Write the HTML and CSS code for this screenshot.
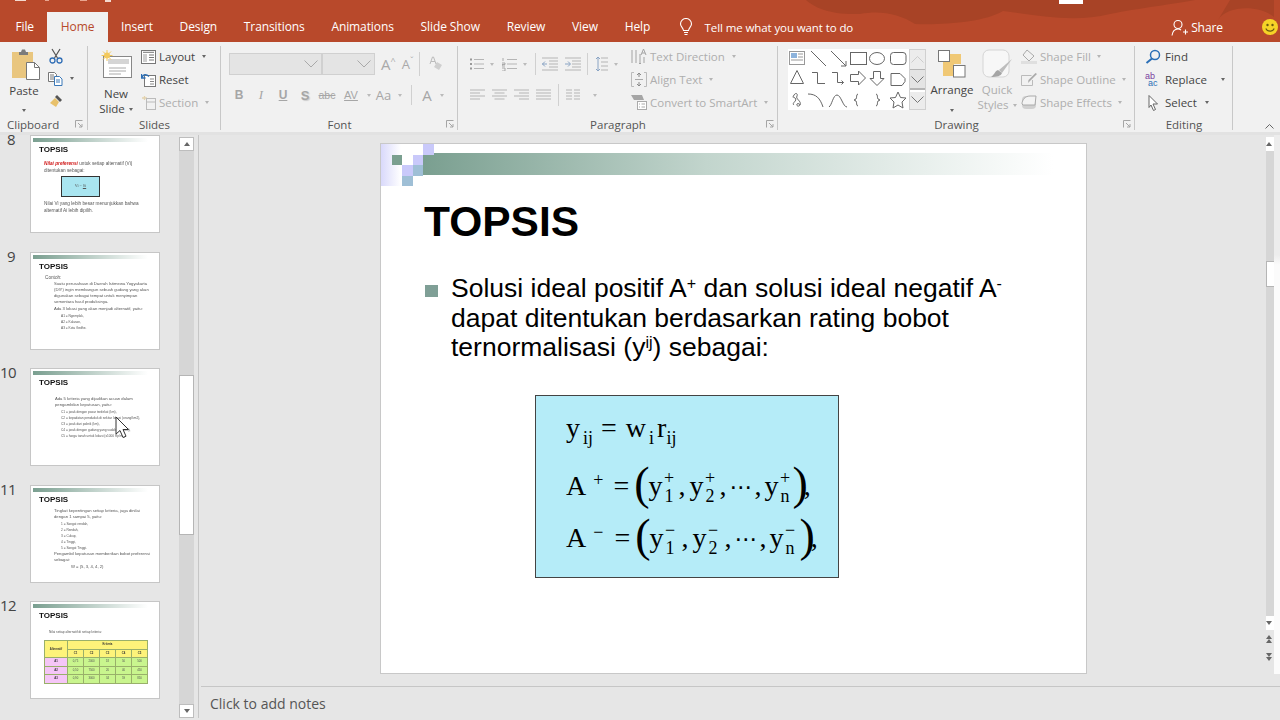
FILE: index.html
```html
<!DOCTYPE html>
<html lang="en">
<head>
    <meta charset="UTF-8">
    <title>TOPSIS - PowerPoint</title>
    <link rel="stylesheet" href="styles.css">
</head>
<body>
    <svg class="defs" width="0" height="0">
        <symbol id="lines-left" viewBox="0 0 15 12"><path d="M0 1h15M0 4h10M0 7h15M0 10h10" stroke="#b5b5b5" fill="none"/></symbol>
        <symbol id="lines-center" viewBox="0 0 15 12"><path d="M0 1h15M2.500 4h10M0 7h15M2.500 10h10" stroke="#b5b5b5" fill="none"/></symbol>
        <symbol id="lines-right" viewBox="0 0 15 12"><path d="M0 1h15M5 4h10M0 7h15M5 10h10" stroke="#b5b5b5" fill="none"/></symbol>
        <symbol id="lines-full" viewBox="0 0 15 12"><path d="M0 1h15M0 4h15M0 7h15M0 10h15" stroke="#b5b5b5" fill="none"/></symbol>
        <symbol id="launcher" viewBox="0 0 8 8"><path d="M.5 7.500v-7h7M3 3l4 4M7 4v3H4" stroke="#a5a5a5" fill="none"/></symbol>
    </svg>

    <!-- Title bar and tabs -->
    <header class="titlebar">
        <svg class="waves" width="1280" height="42" viewBox="0 0 1280 42">
            <path d="M806 0C815 8 830 15 860 14C880 10 900 14 915 24C945 25 985 22 1003 11C1040 16 1075 23 1110 14C1140 8 1175 4 1195 0Z" fill="#a84326"/>
            <path d="M1218 20C1226 6 1258 4 1274 17V0H1230Z" fill="#a84326"/>
        </svg>
        <div class="qat">
            <span class="qat-bit qat-a"></span>
            <span class="qat-bit qat-b"></span>
            <span class="qat-bit qat-c"></span>
            <span class="qat-bit qat-d"></span>
            <span class="qat-white"></span>
        </div>
        <nav class="tabs">
            <span class="tab">File</span>
            <span class="tab tab-active">Home</span>
            <span class="tab">Insert</span>
            <span class="tab">Design</span>
            <span class="tab">Transitions</span>
            <span class="tab">Animations</span>
            <span class="tab">Slide Show</span>
            <span class="tab">Review</span>
            <span class="tab">View</span>
            <span class="tab">Help</span>
            <span class="tell">
                <svg width="14" height="18" viewBox="0 0 14 18"><path d="M4.500 12.500C4 9.500 1.500 8.500 1.500 6a5.500 5.500 0 0 1 11 0c0 2.500-2.500 3.500-3 6.500zM5 14.500h4M5.500 16.500h3" fill="none" stroke="#fff" stroke-width="1.100"/></svg>
                Tell me what you want to do
            </span>
            <span class="share">
                <svg width="17" height="17" viewBox="0 0 17 17"><circle cx="7" cy="5.500" r="4" fill="none" stroke="#fff" stroke-width="1.100"/><path d="M1 16.500c.5-4 3-6.500 6-6.500 1 0 2 .3 3 1M12 13h5M14.500 10.500v5" fill="none" stroke="#fff" stroke-width="1.100"/></svg>
                Share
            </span>
            <svg class="smiley" width="16" height="16" viewBox="0 0 16 16"><circle cx="8" cy="8" r="8" fill="#f5d327"/><circle cx="5.500" cy="6" r="1.200" fill="#6b5a10"/><circle cx="10.500" cy="6" r="1.200" fill="#6b5a10"/><path d="M3.800 9.500c1.500 3.500 7 3.500 8.400 0" fill="none" stroke="#6b5a10" stroke-width="1.100"/></svg>
        </nav>
    </header>

    <!-- Ribbon -->
    <section class="ribbon">
        <div class="group group-clipboard">
            <div class="group-body">
                <div class="big-btn paste-btn">
                    <svg width="28" height="31" viewBox="0 0 28 31"><rect x="0" y="3" width="21" height="26" fill="#e9c67f"/><path d="M7 3h2l1-2.500h3l1 2.500h2v3H7z" fill="#7b7b7b"/><path d="M14.500 13.500h8l5 5v12h-13z" fill="#fff" stroke="#777"/><path d="M22.500 13.500v5h5" fill="none" stroke="#777"/></svg>
                    <span class="big-label">Paste</span>
                    <i class="caret caret-big"></i>
                </div>
                <div class="icon-col">
                    <svg width="16" height="16" viewBox="0 0 16 16"><path d="M4 1l5.500 9M12 1L6.500 10" stroke="#555" stroke-width="1.200" fill="none"/><circle cx="4.500" cy="12.500" r="2.500" fill="none" stroke="#2f6db5" stroke-width="1.300"/><circle cx="11.500" cy="12.500" r="2.500" fill="none" stroke="#2f6db5" stroke-width="1.300"/></svg>
                    <span class="icon-caret">
                        <svg width="15" height="14" viewBox="0 0 15 14"><path d="M.5.500h6l2 2v7h-8zM2 3h4M2 5h4M2 7h4" fill="#fff" stroke="#777"/><path d="M6.500 4.500h5l2.500 2.500v6.500H6.500z" fill="#fff" stroke="#3b78b8"/><path d="M8 8h4M8 10h4" stroke="#3b78b8"/></svg>
                        <i class="caret"></i>
                    </span>
                    <svg width="16" height="16" viewBox="0 0 16 16"><path d="M9 2l5 5-2 2-5-5z" fill="#555"/><path d="M7 5l4 4-3 5-6-4z" fill="#e8c16b"/></svg>
                </div>
            </div>
            <div class="group-label label-clip">Clipboard<svg class="launch launch-clip" width="8" height="8"><use href="#launcher"/></svg></div>
        </div>

        <div class="group group-slides">
            <div class="group-body">
                <div class="big-btn new-slide">
                    <svg width="31" height="28" viewBox="0 0 31 28"><rect x="2.500" y="6.500" width="28" height="21" fill="#fff" stroke="#888"/><rect x="7" y="9" width="21" height="5" fill="#d5d5d5"/><path d="M8 18h17M8 21h17M8 24h12" stroke="#aaa"/><circle cx="6" cy="5.500" r="3" fill="#f3c95c"/><path d="M6 0v11M.5 5.500h11M2 1.500l8 8M10 1.500l-8 8" stroke="#f3c95c"/></svg>
                    <span class="big-label new-label">New<br>Slide<i class="caret caret-inline"></i></span>
                </div>
                <div class="small-col">
                    <div class="small"><svg width="15" height="14" viewBox="0 0 15 14"><rect x=".5" y=".5" width="14" height="13" fill="#fff" stroke="#777"/><rect x="2" y="4" width="4" height="8" fill="#cfcfcf"/><path d="M2 2.300h11M8 5h5M8 7.500h5M8 10h5" stroke="#777"/></svg><span>Layout</span><i class="caret"></i></div>
                    <div class="small"><svg width="15" height="14" viewBox="0 0 15 14"><rect x="3.500" y="2.500" width="11" height="11" fill="#fff" stroke="#777"/><path d="M9 6h4M9 8.500h4M9 11h4" stroke="#888"/><path d="M8 3.500C5 .5 2 1.500.8 4.500M.5 1v4h4" fill="none" stroke="#2b6fb6" stroke-width="1.300"/></svg><span>Reset</span></div>
                    <div class="small is-off"><svg width="15" height="14" viewBox="0 0 15 14"><path d="M1 2h5M3.500 0v4" stroke="#e4d3ae" stroke-width="1.300"/><rect x="5.500" y="2.500" width="9" height="11" fill="none" stroke="#bbb"/><path d="M5.500 6h9" stroke="#bbb"/></svg><span>Section</span><i class="caret"></i></div>
                </div>
            </div>
            <div class="group-label">Slides</div>
        </div>

        <div class="group group-font">
            <div class="group-body group-rows">
                <div class="row-a font-row-a">
                    <span class="combo combo-name"><svg width="14" height="8" viewBox="0 0 14 8"><path d="M.5.500L7 7l6.500-6.500" fill="none" stroke="#a9a9a9"/></svg></span>
                    <span class="combo combo-size"><svg width="14" height="8" viewBox="0 0 14 8"><path d="M.5.500L7 7l6.500-6.500" fill="none" stroke="#a9a9a9"/></svg></span>
                    <span class="glyph glyph-grow">A<small>^</small></span>
                    <span class="glyph glyph-shrink">A<small>ˇ</small></span>
                    <i class="vsep vsep-font"></i>
                    <svg class="eraser" width="15" height="16" viewBox="0 0 15 16"><path d="M8 6l5 3-3 5-5-3z" fill="#cfcfcf"/><path d="M1 8l2.500-7h1L7 8M2 5.500h4" fill="none" stroke="#bbb"/></svg>
                </div>
                <div class="row-b font-row-b">
                    <span class="fmt fmt-b">B</span>
                    <span class="fmt fmt-i">I</span>
                    <span class="fmt fmt-u">U</span>
                    <span class="fmt fmt-s">S</span>
                    <span class="fmt fmt-abc">abc</span>
                    <span class="fmt fmt-av">AV</span><i class="caret"></i>
                    <span class="fmt fmt-aa">Aa</span><i class="caret"></i>
                    <i class="vsep vsep-b"></i>
                    <span class="fmt fmt-a">A</span><i class="caret"></i>
                </div>
            </div>
            <div class="group-label">Font<svg class="launch" width="8" height="8"><use href="#launcher"/></svg></div>
        </div>

        <div class="group group-para">
            <div class="group-body">
                <div class="group-rows para-left">
                    <div class="row-a para-row-a">
                        <svg width="14" height="14" viewBox="0 0 14 14"><path d="M4 2.500h10M4 7h10M4 11.500h10" stroke="#b5b5b5"/><path d="M0 2.500h2M0 7h2M0 11.500h2" stroke="#999" stroke-width="2"/></svg><i class="caret"></i>
                        <svg class="mg-num" width="15" height="14" viewBox="0 0 15 14"><path d="M5 2.500h10M5 7h10M5 11.500h10" stroke="#b5b5b5"/><path d="M1 1v3M0 6h3v1.500H0V9h3M0 11h3v3H0" stroke="#999" fill="none" stroke-width=".8"/></svg><i class="caret"></i>
                        <i class="vsep vsep-p1"></i>
                        <svg width="16" height="14" viewBox="0 0 16 14"><path d="M0 1h16M7 4h9M7 7h9M7 10h9M0 13h16" stroke="#b5b5b5"/><path d="M5 7H0M3 4.500L.5 7 3 9.500" stroke="#8aa4c4" fill="none"/></svg>
                        <svg class="mg-inc" width="16" height="14" viewBox="0 0 16 14"><path d="M0 1h16M7 4h9M7 7h9M7 10h9M0 13h16" stroke="#b5b5b5"/><path d="M0 7h5M3 4.500L5.500 7 3 9.500" stroke="#8aa4c4" fill="none"/></svg>
                        <i class="vsep vsep-p2"></i>
                        <svg width="12" height="15" viewBox="0 0 12 15"><path d="M5 2h7M5 6h7M5 10h7M5 14h7" stroke="#b5b5b5" transform="translate(0 -1)"/><path d="M2 0v14M0 2l2-2 2 2M0 12l2 2 2-2" stroke="#8aa4c4" fill="none"/></svg><i class="caret"></i>
                    </div>
                    <div class="row-b para-row-b">
                        <svg width="15" height="12"><use href="#lines-left"/></svg>
                        <svg width="15" height="12"><use href="#lines-center"/></svg>
                        <svg width="15" height="12"><use href="#lines-right"/></svg>
                        <svg width="15" height="12"><use href="#lines-full"/></svg>
                        <i class="vsep vsep-p3"></i>
                        <svg width="14" height="12" viewBox="0 0 14 12"><path d="M0 1h6M0 4h6M0 7h6M0 10h6M8 1h6M8 4h6M8 7h6M8 10h6" stroke="#b5b5b5"/></svg><i class="caret"></i>
                    </div>
                </div>
                <div class="small-col para-col">
                    <div class="small is-off"><svg width="16" height="15" viewBox="0 0 16 15"><path d="M1 1v13M5 1v13M9 5v9M13 8v6M8 14l1 1 1-1" stroke="#a3a3a3" fill="none"/><path d="M10 6l2.500-6 2.500 6M11 4h3" stroke="#a3a3a3" fill="none"/></svg><span>Text Direction</span><i class="caret"></i></div>
                    <div class="small is-off"><svg width="16" height="15" viewBox="0 0 16 15"><path d="M3 .5H.5v14H3M13 .5h2.500v14H13" stroke="#bbb" fill="none"/><path d="M4 7.500h8" stroke="#aaa"/><path d="M8 1v4M6 3l2-2 2 2M8 14v-4M6 12l2 2 2-2" stroke="#8a8a8a" fill="none"/></svg><span>Align Text</span><i class="caret"></i></div>
                    <div class="small is-off"><svg width="16" height="15" viewBox="0 0 16 15"><path d="M0 0h11l2 5H3z" fill="#a6a6a6"/><rect x="6.500" y="6.500" width="9" height="8" fill="#fff" stroke="#aaa"/><path d="M8 9h1M8 12h1M10.500 9h3.500M10.500 12h3.500" stroke="#aaa"/></svg><span>Convert to SmartArt</span><i class="caret"></i></div>
                </div>
            </div>
            <div class="group-label">Paragraph<svg class="launch" width="8" height="8"><use href="#launcher"/></svg></div>
        </div>

        <div class="group group-draw">
            <div class="group-body">
                <div class="gallery">
                    <svg class="shapes" width="121" height="60" viewBox="0 0 121 60" fill="none" stroke="#666">
                        <rect x="1.500" y="2.500" width="15" height="13" stroke="#999"/><rect x="3" y="4" width="6" height="5" fill="#8db3dc" stroke="none"/><path d="M10 5h5M10 8h5M3 11h12" stroke="#999"/>
                        <path d="M23 2l15 15"/>
                        <path d="M43 2l15 15M53 17h5v-5"/>
                        <rect x="62.500" y="3.500" width="16" height="12"/>
                        <ellipse cx="89" cy="9.500" rx="7.500" ry="6"/>
                        <rect x="102.500" y="3.500" width="15.500" height="12" rx="3"/>
                        <path d="M9 21.500l6.500 13H2.500z"/>
                        <path d="M24 23.500h5.500v11H37"/>
                        <path d="M44 23.500h5.500v10h6M53.500 31.500l2 2-2 2"/>
                        <path d="M62.500 25.500h8v-3.500l7 7-7 7v-3.500h-8z"/>
                        <path d="M85.500 22.500h7v7h3.500l-7 7-7-7h3.500z"/>
                        <path d="M103 24.500h9l5 5v3l-3 4h-11z"/>
                        <path d="M6 56c-3-2 4-4 1-7-2-2-3 1-1-3 2-3 4-1 3 1-2 3 5 5 3 9-1 2-4 1-3-1 1-1 3 0 3 1"/>
                        <path d="M20 45c8 0 12 4 15 13"/>
                        <path d="M41 58c3-2 4-12 8-12s6 12 10 12"/>
                        <path d="M70 45c-2 0-1 4-2 5l-2 1 2 1c1 1 0 5 2 5"/>
                        <path d="M88 45c2 0 1 4 2 5l2 1-2 1c-1 1 0 5-2 5"/>
                        <path d="M110 43l2.500 5.500 5.500.5-4 4 1 6-5-3-5 3 1-6-4-4 5.500-.5z"/>
                    </svg>
                    <div class="gal-scroll">
                        <span class="gal-btn gal-up"><svg width="13" height="7" viewBox="0 0 13 7"><path d="M.5 6.500l6-6 6 6" fill="none" stroke="#ccc"/></svg></span>
                        <span class="gal-btn gal-down"><svg width="13" height="7" viewBox="0 0 13 7"><path d="M.5.500l6 6 6-6" fill="none" stroke="#777"/></svg></span>
                        <span class="gal-btn gal-more"><svg width="13" height="7" viewBox="0 0 13 7"><path d="M.5.500l6 6 6-6" fill="none" stroke="#777"/></svg></span>
                    </div>
                </div>
                <div class="big-btn arrange">
                    <svg width="28" height="28" viewBox="0 0 28 28"><rect x="5" y="4" width="18" height="10" fill="#f0c875"/><rect x="5" y="14" width="11" height="12" fill="#f0c875"/><rect x=".5" y=".5" width="11" height="11" fill="#fff" stroke="#777"/><rect x="15.500" y="15.500" width="11.500" height="11.500" fill="#fff" stroke="#777"/></svg>
                    <span class="big-label">Arrange</span>
                    <i class="caret caret-big"></i>
                </div>
                <div class="big-btn quick is-off">
                    <svg width="30" height="30" viewBox="0 0 30 30"><rect x="1" y="1" width="26" height="27" rx="6" fill="#f7f7f7" stroke="#d5d5d5"/><path d="M30 10L17 21l3 3z" fill="#bdbdbd"/><path d="M16 21c-3 1-3 4-7 7 6 0 10-1 11-4z" fill="#a5a5a5"/></svg>
                    <span class="big-label new-label">Quick<br>Styles<i class="caret caret-inline"></i></span>
                </div>
                <div class="small-col shape-col">
                    <div class="small is-off"><svg width="17" height="15" viewBox="0 0 17 15"><path d="M6 1l7 6-5 5-6-6z" fill="none" stroke="#aaa"/><path d="M0 12h16v3H0z" fill="#dfdfdf"/></svg><span>Shape Fill</span><i class="caret"></i></div>
                    <div class="small is-off"><svg width="17" height="15" viewBox="0 0 17 15"><path d="M.5 3.500h10M.5 3.500v10h11V8" fill="none" stroke="#bbb"/><path d="M16 2L9 9l-2 2 .5-3 7-7z" fill="#aaa"/></svg><span>Shape Outline</span><i class="caret"></i></div>
                    <div class="small is-off"><svg width="17" height="15" viewBox="0 0 17 15"><rect x="1" y="1" width="14" height="13" rx="4" fill="#d0d0d0"/><path d="M1 9c0-4 3-8 8-8h6l-1 9H2z" fill="#f3f3f3" stroke="#aaa"/></svg><span>Shape Effects</span><i class="caret"></i></div>
                </div>
            </div>
            <div class="group-label">Drawing<svg class="launch" width="8" height="8"><use href="#launcher"/></svg></div>
        </div>

        <div class="group group-edit">
            <div class="group-body">
                <div class="small-col edit-col">
                    <div class="small"><svg width="16" height="15" viewBox="0 0 16 15"><circle cx="10" cy="6" r="4.500" fill="none" stroke="#2b6fb6" stroke-width="1.500"/><path d="M7 9.500L1.500 14" stroke="#2b6fb6" stroke-width="2"/></svg><span>Find</span></div>
                    <div class="small"><span class="replace-icon"><b>ab</b><b>ac</b></span><span>Replace</span><i class="caret caret-far"></i></div>
                    <div class="small"><svg width="16" height="16" viewBox="0 0 16 16"><path d="M4 .5l8.500 8.500H8l2.500 5.500-2 1L6 10l-2 2.500z" fill="#fff" stroke="#666"/></svg><span>Select</span><i class="caret"></i></div>
                </div>
            </div>
            <div class="group-label">Editing</div>
        </div>

        <div class="ribbon-end">
            <svg class="collapse" width="9" height="5" viewBox="0 0 9 5"><path d="M.5 4.500l4-4 4 4" fill="none" stroke="#666"/></svg>
        </div>
    </section>

    <!-- Workspace -->
    <main class="workspace">
        <aside class="side">
            <div class="thumbs">
                <div class="thumb-row">
                    <span class="num">8</span>
                    <div class="thumb"><div class="mini">
                        <i class="mini-band"></i>
                        <div class="mini-title">TOPSIS</div>
                        <div class="t1 t-first8"><em>Nilai preferensi</em> untuk setiap alternatif (Vi) ditentukan sebagai:</div>
                        <div class="mini-formula">Vi = <u>Si</u></div>
                        <div class="t1">Nilai Vi yang lebih besar menunjukkan bahwa alternatif Ai lebih dipilih.</div>
                    </div></div>
                </div>
                <div class="thumb-row">
                    <span class="num">9</span>
                    <div class="thumb"><div class="mini">
                        <i class="mini-band"></i>
                        <div class="mini-title">TOPSIS</div>
                        <div class="t0">Contoh:</div>
                        <div class="t2">Suatu perusahaan di Daerah Istimewa Yogyakarta (DIY) ingin membangun sebuah gudang yang akan digunakan sebagai tempat untuk menyimpan sementara hasil produksinya.</div>
                        <div class="t2">Ada 3 lokasi yang akan menjadi alternatif, yaitu:</div>
                        <div class="t3">A1 = Ngemplak,</div>
                        <div class="t3">A2 = Kalasan,</div>
                        <div class="t3">A3 = Kota Gedhe.</div>
                    </div></div>
                </div>
                <div class="thumb-row">
                    <span class="num">10</span>
                    <div class="thumb"><div class="mini">
                        <i class="mini-band"></i>
                        <div class="mini-title">TOPSIS</div>
                        <div class="t2 t-gap">Ada 5 kriteria yang dijadikan acuan dalam pengambilan keputusan, yaitu:</div>
                        <div class="t3">C1 = jarak dengan pasar terdekat (km),</div>
                        <div class="t3">C2 = kepadatan penduduk di sekitar lokasi (orang/km2),</div>
                        <div class="t3">C3 = jarak dari pabrik (km),</div>
                        <div class="t3">C4 = jarak dengan gudang yang sudah ada (km),</div>
                        <div class="t3">C5 = harga tanah untuk lokasi (x1000 Rp/m2).</div>
                    </div></div>
                </div>
                <div class="thumb-row">
                    <span class="num">11</span>
                    <div class="thumb"><div class="mini">
                        <i class="mini-band"></i>
                        <div class="mini-title">TOPSIS</div>
                        <div class="t2">Tingkat kepentingan setiap kriteria, juga dinilai dengan 1 sampai 5, yaitu:</div>
                        <div class="t3">1 = Sangat rendah,</div>
                        <div class="t3">2 = Rendah,</div>
                        <div class="t3">3 = Cukup,</div>
                        <div class="t3">4 = Tinggi,</div>
                        <div class="t3">5 = Sangat Tinggi.</div>
                        <div class="t2">Pengambil keputusan memberikan bobot preferensi sebagai:</div>
                        <div class="t-w">W = (5, 3, 4, 4, 2)</div>
                    </div></div>
                </div>
                <div class="thumb-row">
                    <span class="num">12</span>
                    <div class="thumb"><div class="mini">
                        <i class="mini-band"></i>
                        <div class="mini-title">TOPSIS</div>
                        <div class="t3 t-gap12">Nilai setiap alternatif di setiap kriteria:</div>
                        <table class="mini-table">
                            <tr><th rowspan="2" class="alt">Alternatif</th><th colspan="5">Kriteria</th></tr>
                            <tr><th>C1</th><th>C2</th><th>C3</th><th>C4</th><th>C5</th></tr>
                            <tr><th class="alt">A1</th><td>0,75</td><td>2000</td><td>18</td><td>50</td><td>500</td></tr>
                            <tr><th class="alt">A2</th><td>0,50</td><td>7500</td><td>20</td><td>40</td><td>450</td></tr>
                            <tr><th class="alt">A3</th><td>0,90</td><td>3000</td><td>34</td><td>59</td><td>850</td></tr>
                        </table>
                    </div></div>
                </div>
                <div class="thumb-row">
                    <span class="num">13</span>
                    <div class="thumb"></div>
                </div>
            </div>
            <div class="side-scroll">
                <span class="sb-btn"><i class="tri-up"></i></span>
                <span class="sb-track sb-track-a"></span>
                <span class="sb-thumb"></span>
                <span class="sb-track sb-track-b"></span>
                <span class="sb-btn"><i class="tri-down"></i></span>
            </div>
        </aside>

        <div class="center">
            <div class="canvas">
                <div class="slide-wrap">
                    <article class="slide">
                        <i class="slide-band"></i>
                        <div class="checker">
                            <i class="c-fade"></i>
                            <i class="c-green"></i>
                            <i class="c-lav c-a"></i>
                            <i class="c-lav c-b"></i>
                            <i class="c-lav c-c"></i>
                            <i class="c-blue c-d"></i>
                            <i class="c-blue c-e"></i>
                        </div>
                        <h1 class="slide-title">TOPSIS</h1>
                        <div class="slide-bullet">
                            <i class="bullet"></i>
                            <p>Solusi ideal positif A<sup>+</sup> dan solusi ideal negatif A<sup>-</sup><br>dapat ditentukan berdasarkan rating bobot<br>ternormalisasi (y<sup>ij</sup>) sebagai:</p>
                        </div>
                        <div class="formula">
                            <div class="f-row f-row1">y<span class="fs sub m3">ij</span><span class="m8">=</span><span class="m9">w</span><span class="fs sub m3">i</span><span class="m3">r</span><span class="fs sub">ij</span></div>
                            <div class="f-row f-row2">A<span class="fs sup m7">+</span><span class="m10">=</span><span class="paren m5">(</span><span class="m-1">y</span><span class="stack"><span>+</span><span>1</span></span><span class="m3">,</span><span class="m4">y</span><span class="stack"><span>+</span><span>2</span></span><span class="m3">,</span><span class="dots m3">⋯</span><span class="m3">,</span><span class="m3">y</span><span class="stack"><span>+</span><span class="n">n</span></span><span class="paren m1">)</span><span class="m-4">,</span></div>
                            <div class="f-row f-row3">A<span class="fs sup m7">−</span><span class="m11">=</span><span class="paren m5">(</span><span class="m-1">y</span><span class="stack"><span>−</span><span>1</span></span><span class="m5">,</span><span class="m4">y</span><span class="stack"><span>−</span><span>2</span></span><span class="m5">,</span><span class="dots m3">⋯</span><span class="m3">,</span><span class="m3">y</span><span class="stack"><span>−</span><span class="n">n</span></span><span class="paren m3">)</span><span class="m-4">,</span></div>
                        </div>
                    </article>
                </div>
                <div class="main-scroll">
                    <span class="ms-btn"><i class="tri-up"></i></span>
                    <span class="ms-track ms-a"></span>
                    <span class="ms-thumb"></span>
                    <span class="ms-track ms-b"></span>
                    <span class="ms-btn"><i class="tri-down"></i></span>
                    <span class="ms-page"><i class="tri-up"></i><i class="tri-up"></i></span>
                    <span class="ms-page"><i class="tri-down"></i><i class="tri-down"></i></span>
                </div>
                <div class="edge"></div>
            </div>
            <div class="notes">Click to add notes</div>
        </div>
    </main>

    <!-- Mouse pointer over thumbnail 10 -->
    <svg class="pointer" width="15" height="23" viewBox="0 0 15 23"><path d="M1 1v17l4-3.500 3 7 3-1.300-3-6.700h5.500z" fill="#fff" stroke="#333"/></svg>
</body>
</html>
```
FILE: styles.css
```css
/* Grunddesign */
body {
    margin: 0;
    width: 1280px;
    height: 720px;
    overflow: hidden;
    display: flex;
    flex-direction: column;
    background-color: #e6e6e6;
    color: #444;
    font-family: "Open Sans", sans-serif;
    font-size: 11.5px;
    position: relative;
}

.defs {
    position: absolute;
}

i {
    display: block;
    font-style: normal;
}

/* Title bar */
.titlebar {
    height: 42px;
    flex: none;
    background-color: #b8492b;
    color: #fff;
    position: relative;
}

.waves {
    position: absolute;
    top: 0;
    left: 0;
}

.qat {
    height: 12px;
    display: flex;
    position: relative;
}

.qat-bit {
    height: 1px;
    background-color: #f3d9cf;
}

.qat-a { width: 11px; margin-left: 15px; }
.qat-b { width: 4px; margin-left: 19px; background-color: #e9a58f; }
.qat-c { width: 7px; margin-left: 31px; background-color: #e9a58f; }
.qat-d { width: 6px; margin-left: 18px; height: 2px; }

.qat-white {
    width: 24px;
    height: 4px;
    margin-left: 948px;
    background-color: #fff;
}

.tabs {
    height: 30px;
    display: flex;
    align-items: center;
    position: relative;
    padding-left: 2px;
    font-size: 12px;
    letter-spacing: -0.1px;
}

.tab {
    height: 30px;
    line-height: 30px;
    padding: 0 13.400px;
}

.tab-active {
    background-color: #f1f1f1;
    color: #b8492b;
}

.tell {
    display: flex;
    align-items: center;
    gap: 12px;
    margin-left: 15px;
    font-size: 11.500px;
}

.share {
    display: flex;
    align-items: center;
    gap: 3px;
    margin-left: 318px;
}

.smiley {
    margin-left: 39px;
}

/* Ribbon */
.ribbon {
    height: 90px;
    flex: none;
    display: flex;
    background-color: #f1f1f1;
    border-bottom: 3px solid #e2e2e2;
}

.group {
    flex: none;
    display: flex;
    flex-direction: column;
    position: relative;
    padding-top: 3px;
    box-sizing: border-box;
}

.group::after {
    content: "";
    position: absolute;
    right: 0;
    top: 4px;
    bottom: 2px;
    width: 1px;
    background-color: #c8c8c8;
}

.group-clipboard { width: 88px; }
.group-slides { width: 133px; }
.group-font { width: 237px; }
.group-para { width: 320px; }
.group-draw { width: 357px; }
.group-edit { width: 98px; }

.group-body {
    height: 72px;
    display: flex;
}

.group-label {
    height: 15px;
    line-height: 15px;
    text-align: center;
    font-size: 11.500px;
    position: relative;
    color: #555;
}

.label-clip {
    text-align: left;
    padding-left: 7px;
}

.launch {
    position: absolute;
    right: 4px;
    top: 3px;
}

.launch-clip {
    right: 5px;
}

.big-btn {
    display: flex;
    flex-direction: column;
    align-items: center;
    padding-top: 4px;
}

.big-label {
    text-align: center;
    line-height: 15.500px;
}

.paste-btn {
    width: 32px;
    margin-left: 8px;
    gap: 3px;
}

.paste-btn svg {
    margin-left: 4px;
}

.new-slide {
    width: 40px;
    margin-left: 8px;
    gap: 8px;
    padding-top: 5px;
}

.new-label {
    line-height: 15px;
}

.caret {
    width: 0;
    height: 0;
    flex: none;
    border-left: 2.500px solid transparent;
    border-right: 2.500px solid transparent;
    border-top: 3px solid #666;
    margin-left: 4px;
}

.caret-big {
    margin: 7px 0 0;
}

.caret-inline {
    display: inline-block;
    vertical-align: 2px;
}

.caret-far {
    margin-left: 10px;
}

.icon-col {
    width: 32px;
    margin-left: 8px;
    display: flex;
    flex-direction: column;
    gap: 7px;
    padding-top: 3px;
}

.icon-caret {
    display: flex;
    align-items: center;
    height: 15px;
}

.icon-caret .caret {
    margin-left: 7px;
}

.small-col {
    display: flex;
    flex-direction: column;
}

.small {
    height: 23px;
    display: flex;
    align-items: center;
    gap: 3px;
}

.is-off {
    color: #aeaeae;
}

.is-off .caret {
    border-top-color: #b5b5b5;
}

.group-slides .small-col {
    margin-left: 5px;
}

/* Font group */
.group-rows {
    display: flex;
    flex-direction: column;
    padding-top: 8px;
    box-sizing: border-box;
}

.row-a, .row-b {
    display: flex;
    align-items: center;
    height: 22px;
}

.row-b {
    margin-top: 9px;
}

.font-row-a {
    padding-left: 8px;
}

.combo {
    height: 22px;
    box-sizing: border-box;
    background-color: #e4e4e4;
    border: 1px solid #d0d0d0;
    display: flex;
    align-items: center;
    justify-content: flex-end;
    padding-right: 3px;
}

.combo-name { width: 93px; }
.combo-size { width: 53px; }

.glyph {
    color: #a9a9a9;
    font-size: 15px;
    line-height: 15px;
    display: flex;
}

.glyph small {
    font-size: 9px;
    line-height: 8px;
}

.glyph-grow { margin-left: 6px; }
.glyph-shrink { margin-left: 6px; font-size: 13px; }

.vsep {
    width: 1px;
    height: 20px;
    background-color: #d0d0d0;
}

.vsep-font { margin-left: 5px; height: 24px; }

.eraser {
    margin-left: 9px;
}

.font-row-b {
    padding-left: 7px;
}

.fmt {
    width: 22px;
    text-align: center;
    color: #a6a6a6;
    font-size: 12px;
    font-family: "Liberation Sans", sans-serif;
}

.fmt-b { font-weight: bold; }
.fmt-i { font-style: italic; font-family: "Liberation Serif", serif; font-size: 13px; }
.fmt-u { text-decoration: underline; font-weight: bold; }
.fmt-s { font-weight: bold; font-size: 13px; text-shadow: 1px 1px 1px #ccc; }
.fmt-abc { font-size: 10.500px; text-decoration: line-through; }
.fmt-av { width: 24px; font-size: 11px; margin-left: 1px; text-decoration: underline; }
.fmt-aa { width: 21px; margin-left: 2px; font-size: 13px; font-family: "Open Sans", sans-serif; }
.fmt-a { width: 18px; margin-left: 6px; font-size: 15px; font-family: "Open Sans", sans-serif; }

.vsep-b { margin-left: 9px; }

.font-row-b .caret {
    border-top-color: #bbb;
}

/* Paragraph group */
.para-left {
    width: 173px;
    padding-left: 12px;
}

.para-row-a .caret,
.para-row-b .caret {
    border-top-color: #bbb;
    margin-left: 6px;
}

.para-row-a {
    height: 18px;
    margin-top: 2px;
    gap: 0;
}

.mg-num { margin-left: 8px; }
.mg-inc { margin-left: 7px; }

.vsep-p1 { margin: 0 6px 0 8px; }
.vsep-p2 { margin: 0 8px 0 6px; }
.vsep-p3 { margin: 0 7px; }

.para-row-a .vsep, .para-row-b .vsep {
    height: 22px;
}

.para-row-b {
    gap: 7px;
    margin-top: 11px;
}

.para-row-b .vsep-p3 {
    margin: 0;
}

.para-col {
    width: 140px;
}

/* Drawing group */
.group-draw .group-body {
    padding-left: 10px;
}

.gallery {
    width: 138px;
    height: 61px;
    margin-top: 4px;
    display: flex;
    background-color: #fff;
    box-sizing: border-box;
}

.shapes {
    flex: none;
}

.gal-scroll {
    width: 17px;
    display: flex;
    flex-direction: column;
    background-color: #ececec;
    border: 1px solid #d0d0d0;
    box-sizing: border-box;
}

.gal-btn {
    display: flex;
    align-items: center;
    justify-content: center;
    flex: 1;
}

.gal-down {
    background-color: #e4e4e4;
    border-top: 1px solid #b5b5b5;
    border-bottom: 1px solid #b5b5b5;
}

.gal-more {
    box-shadow: inset 0 2px 0 #fff;
    border-top: 1px solid #b5b5b5;
}

.arrange {
    width: 42px;
    margin-left: 5px;
    gap: 4px;
    padding-top: 5px;
}

.quick {
    width: 40px;
    margin-left: 4px;
    gap: 3px;
    padding-top: 4px;
}

.shape-col {
    margin-left: 4px;
}

.shape-col .small {
    gap: 2px;
}

/* Editing group */
.edit-col {
    margin-left: 10px;
}

.edit-col .small {
    gap: 4px;
}

.replace-icon {
    width: 16px;
    display: flex;
    flex-direction: column;
    font-size: 9px;
    line-height: 7px;
    font-family: "Liberation Sans", sans-serif;
}

.replace-icon b { font-weight: normal; color: #7a3fa0; }
.replace-icon b + b { color: #2b6fb6; margin-left: 3px; }

.ribbon-end {
    flex: 1;
    display: flex;
    justify-content: flex-end;
    align-items: flex-end;
    padding: 0 6px 3px 0;
}

/* Workspace */
.workspace {
    flex: 1;
    display: flex;
    min-height: 0;
}

.side {
    width: 199px;
    flex: none;
    box-sizing: border-box;
    border-right: 1px solid #c6c6c6;
    margin-bottom: 2px;
    display: flex;
}

.thumbs {
    width: 179px;
    flex: none;
    overflow: hidden;
}

.thumb-row {
    display: flex;
    height: 98px;
    margin-bottom: 18.500px;
}

.num {
    width: 15px;
    flex: none;
    text-align: right;
    font-size: 15px;
    line-height: 16px;
    margin-top: -4px;
    letter-spacing: -0.5px;
}

.thumb {
    width: 128px;
    height: 96px;
    margin-left: 15px;
    background-color: #fff;
    border: 1px solid #c6c6c6;
    flex: none;
    overflow: hidden;
}

.mini {
    height: 96px;
    padding: 8px 4px 0 8px;
    box-sizing: border-box;
    position: relative;
    filter: blur(0.350px);
    font-family: "Liberation Sans", sans-serif;
    color: #555;
}

.mini-band {
    position: absolute;
    left: 2px;
    top: 2px;
    width: 115px;
    height: 4px;
    background: linear-gradient(to right, #7a9f90, #fff);
}

.mini-title {
    font-weight: bold;
    font-size: 8px;
    line-height: 11px;
    color: #111;
    margin-bottom: 3px;
}

.t0 {
    font-size: 4.700px;
    line-height: 6px;
    margin-left: 6px;
}

.t1 {
    font-size: 4.700px;
    line-height: 7px;
    margin-left: 5px;
}

.t1 em {
    color: #d01818;
    font-weight: bold;
}

.t-first8 {
    margin-top: 5px;
}

.t2 {
    font-size: 4.200px;
    line-height: 6px;
    margin: 0 2px 1px 15px;
}

.t3 {
    font-size: 3.200px;
    line-height: 6px;
    margin-left: 22px;
}

.t-gap {
    margin-top: 8px;
    margin-left: 16px;
}

.t-gap12 {
    margin-top: 8px;
    margin-left: 10px;
}

.t-w {
    font-size: 4.200px;
    line-height: 6px;
    margin-left: 32px;
}

.mini-formula {
    width: 39px;
    height: 21px;
    box-sizing: border-box;
    margin: 2px 0 3px 22px;
    background-color: #a9e5f0;
    border: 1px solid #333;
    font-family: "Liberation Serif", serif;
    font-size: 4px;
    line-height: 17px;
    text-align: center;
}

.mini-table {
    border-collapse: collapse;
    margin: 5px 0 0 5px;
    width: 104px;
    table-layout: fixed;
    font-size: 2.800px;
    text-align: center;
}

.mini-table th, .mini-table td {
    border: 1px solid #99b06a;
    height: 7.500px;
    padding: 0;
    background-color: #c9f58e;
    line-height: 3px;
}

.mini-table th {
    background-color: #fdf37a;
    color: #333;
}

.mini-table .alt {
    background-color: #f5c6f7;
    width: 22px;
}

.mini-table tr:first-child .alt {
    background-color: #fdf37a;
}

.side-scroll {
    width: 15px;
    flex: none;
    margin-top: 2px;
    display: flex;
    flex-direction: column;
}

.sb-btn {
    height: 14px;
    flex: none;
    background-color: #fff;
    border: 1px solid #bdbdbd;
    box-sizing: border-box;
    display: flex;
    align-items: center;
    justify-content: center;
}

.sb-track {
    background-color: #d6d6d6;
}

.sb-track-a { height: 224px; }
.sb-track-b { flex: 1; }

.sb-thumb {
    height: 160px;
    box-sizing: border-box;
    background-color: #fff;
    border: 1px solid #b5b5b5;
}

.tri-up, .tri-down {
    width: 0;
    height: 0;
    border-left: 3.500px solid transparent;
    border-right: 3.500px solid transparent;
}

.tri-up { border-bottom: 4px solid #666; }
.tri-down { border-top: 4px solid #666; }

/* Slide canvas */
.center {
    flex: 1;
    display: flex;
    flex-direction: column;
    min-width: 0;
}

.canvas {
    flex: 1;
    display: flex;
    min-height: 0;
}

.slide-wrap {
    flex: 1;
    padding: 8px 0 0 181px;
}

.slide {
    width: 707px;
    height: 531px;
    box-sizing: border-box;
    background-color: #fff;
    border: 1px solid #c8c8c8;
    position: relative;
    padding: 54px 0 0 43px;
    font-family: "Liberation Sans", sans-serif;
    color: #000;
}

.slide-band {
    position: absolute;
    left: 42px;
    top: 9px;
    width: 630px;
    height: 22px;
    background: linear-gradient(to right, #7a9f90 0%, #c2d5cd 45%, #fff 100%);
}

.checker {
    position: absolute;
    left: 0;
    top: 0;
    display: grid;
    grid-template-columns: repeat(5, 10.500px);
    grid-template-rows: repeat(4, 10.500px);
}

.c-fade {
    grid-column: 1 / 3;
    grid-row: 1 / 5;
    width: 20px;
    background: linear-gradient(to right, #d9d9fb, #fff);
}

.c-green {
    grid-column: 2;
    grid-row: 2;
    background-color: #7a9f90;
}

.c-lav { background-color: #c9c9fa; }
.c-blue { background-color: #9fbfd6; }

.c-a { grid-column: 5; grid-row: 1; }
.c-b { grid-column: 4; grid-row: 2; }
.c-c { grid-column: 3; grid-row: 3; }
.c-d { grid-column: 4; grid-row: 3; }
.c-e { grid-column: 3; grid-row: 4; }

.slide-title {
    margin: 0;
    position: relative;
    font-size: 42.500px;
    line-height: 48px;
    font-weight: bold;
}

.slide-bullet {
    display: flex;
    margin-top: 28px;
    font-size: 26.500px;
    line-height: 29.500px;
}

.slide-bullet p {
    margin: 0 0 0 13px;
    white-space: nowrap;
}

.slide-bullet sup {
    font-size: 16px;
    line-height: 0;
    vertical-align: 8px;
}

.bullet {
    width: 13px;
    height: 12px;
    flex: none;
    margin: 11px 0 0 1px;
    background-color: #7f9f96;
}

.formula {
    width: 304px;
    height: 183px;
    margin: 32px 0 0 111px;
    box-sizing: border-box;
    background-color: #b5ecf8;
    border: 1px solid #444;
    padding: 6px 0 0 30px;
    font-family: "Liberation Serif", serif;
    font-size: 28px;
}

.f-row {
    white-space: nowrap;
    height: 52px;
    line-height: 52px;
}

.f-row3 {
    height: 53px;
}

.fs {
    font-size: 18px;
}

.sub { vertical-align: -7px; }
.sup { vertical-align: 9px; }

.stack {
    display: inline-flex;
    flex-direction: column;
    vertical-align: 11px;
    font-size: 18px;
    line-height: 18px;
    text-align: center;
    width: 13px;
}

.paren {
    font-size: 46px;
    line-height: 0;
    font-weight: normal;
    vertical-align: -4px;
}

.dots {
    font-family: "DejaVu Sans", sans-serif;
    font-size: 23px;
    letter-spacing: -1px;
}

.m-4 { margin-left: -4px; }
.m-1 { margin-left: -1px; }
.m1 { margin-left: 1px; }
.m3 { margin-left: 3px; }
.m4 { margin-left: 4px; }
.m5 { margin-left: 5px; }
.m7 { margin-left: 7px; }
.m8 { margin-left: 8px; }
.m9 { margin-left: 9px; }
.m10 { margin-left: 10px; }
.m11 { margin-left: 11px; }

/* Main scrollbar */
.main-scroll {
    width: 8px;
    flex: none;
    padding-top: 2px;
    display: flex;
    flex-direction: column;
}

.ms-btn {
    height: 14px;
    flex: none;
    background-color: #fff;
    display: flex;
    align-items: center;
    justify-content: flex-start;
}

.ms-track {
    background-color: #d6d6d6;
}

.ms-a { height: 110px; }
.ms-b { height: 329px; }

.ms-thumb {
    height: 26px;
    background-color: #fff;
    border: 1px solid #b5b5b5;
    border-right: none;
    box-sizing: border-box;
}

.ms-page {
    height: 17px;
    display: flex;
    flex-direction: column;
    align-items: flex-start;
    margin-top: 1px;
}

.ms-btn + .ms-page {
    margin-top: 5px;
}

.edge {
    width: 6px;
    flex: none;
    margin-bottom: 12px;
    background: linear-gradient(to bottom, #ededed 0, #ededed 120px, #fbfbfb 130px);
}

.notes {
    height: 34px;
    flex: none;
    box-sizing: border-box;
    margin-left: 2px;
    border-top: 1px solid #c6c6c6;
    padding-left: 9px;
    line-height: 33px;
    font-size: 14px;
    color: #555;
}

.pointer {
    position: absolute;
    left: 115px;
    top: 416px;
}
```
